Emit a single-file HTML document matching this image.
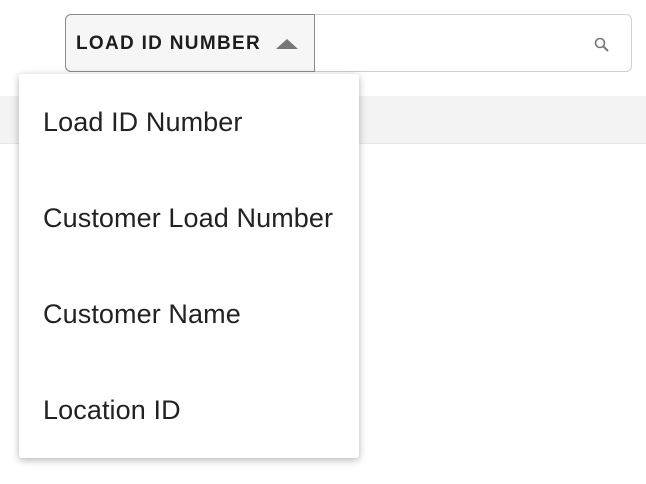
<!DOCTYPE html>
<html><head><style>
body{margin:0;width:646px;height:484px;background:#fff;position:relative;overflow:hidden;font-family:"Liberation Sans",sans-serif}
.band{position:absolute;left:0;top:96px;width:646px;height:47px;background:#f2f3f2;border-bottom:1px solid #e6e6e6}
.input{position:absolute;left:65px;top:14px;width:565px;height:56px;border:1px solid #cfcfcf;border-radius:6px;background:#fff}
.sel{position:absolute;left:65px;top:14px;width:248px;height:56px;border:1px solid #8a8a8a;border-radius:6px 0 0 6px;background:#f6f6f6;box-sizing:content-box}
.sel span{position:absolute;left:10px;top:18px;font-weight:bold;font-size:19px;color:#1d1d1d;letter-spacing:1.3px}
.tri{position:absolute;left:210px;top:24px;width:0;height:0;border-left:11px solid transparent;border-right:11px solid transparent;border-bottom:10px solid #777}
.dd{position:absolute;left:19px;top:74px;width:340px;height:384px;background:#fff;border-radius:3px;box-shadow:0 2px 8px rgba(0,0,0,.3)}
.it{position:absolute;left:24px;font-size:27px;color:#222;letter-spacing:0.1px}
</style></head><body>
<div class="band"></div>
<div class="input"><svg style="position:absolute;left:528px;top:22px" width="16" height="16" viewBox="0 0 16 16"><circle cx="6" cy="6" r="4.5" fill="none" stroke="#777" stroke-width="1.6"/><line x1="9.3" y1="9.3" x2="14" y2="14" stroke="#777" stroke-width="2"/></svg></div>
<div class="sel"><span>LOAD ID NUMBER</span><div class="tri"></div></div>
<div class="dd">
<div class="it" style="top:33px">Load ID Number</div>
<div class="it" style="top:129px">Customer Load Number</div>
<div class="it" style="top:225px">Customer Name</div>
<div class="it" style="top:321px">Location ID</div>
</div>
</body></html>
